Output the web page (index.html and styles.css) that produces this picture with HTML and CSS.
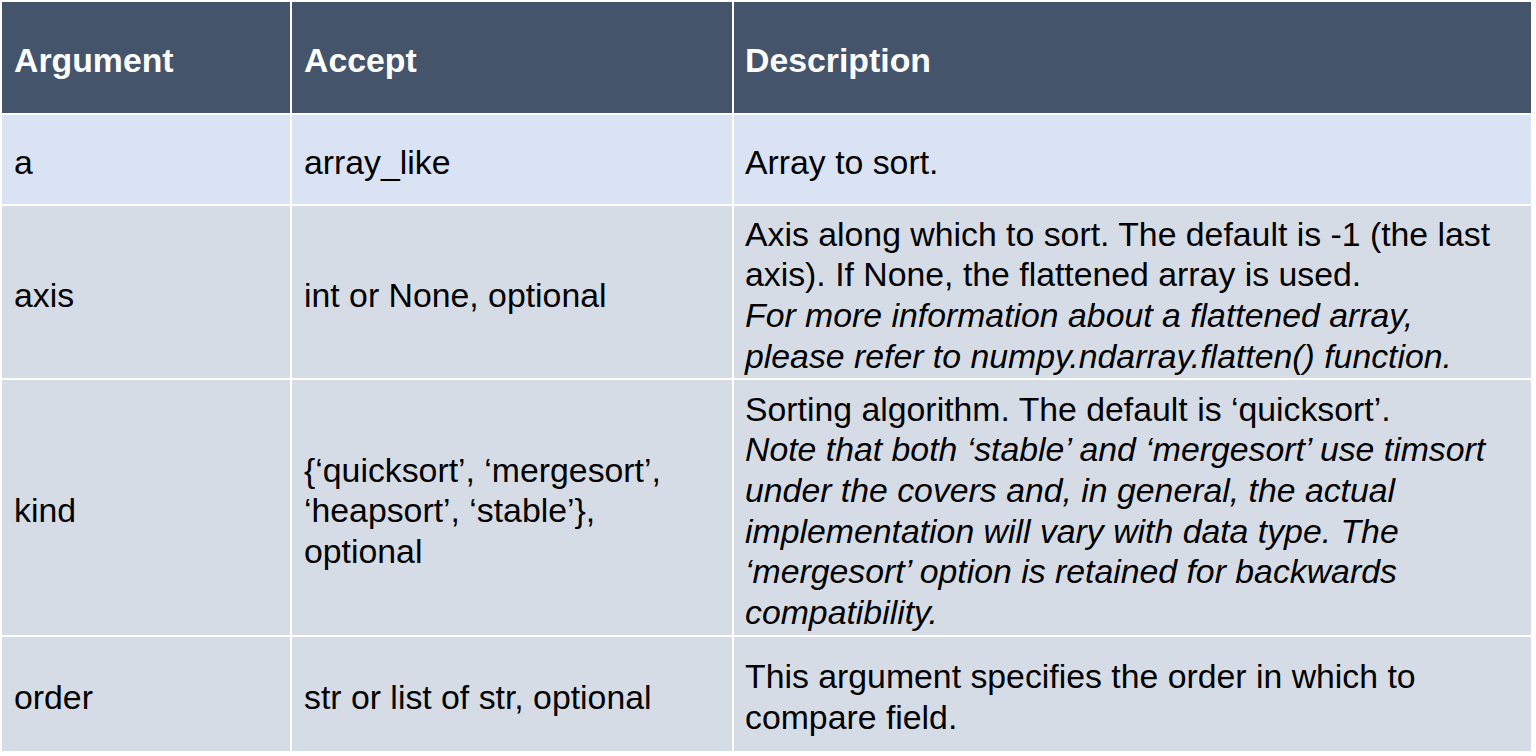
FILE: index.html
```html
<!DOCTYPE html>
<html lang="en">
<head>
<meta charset="utf-8">
<title>numpy.sort arguments</title>
<link rel="stylesheet" href="styles.css">
</head>
<body>
<table class="args">
  <colgroup>
    <col class="c1">
    <col class="c2">
    <col class="c3">
  </colgroup>
  <thead>
    <tr class="head">
      <th>Argument</th>
      <th>Accept</th>
      <th>Description</th>
    </tr>
  </thead>
  <tbody>
    <tr class="row-a first">
      <td>a</td>
      <td>array_like</td>
      <td>Array to sort.</td>
    </tr>
    <tr class="row-axis">
      <td>axis</td>
      <td>int or None, optional</td>
      <td>Axis along which to sort. The default is -1 (the last axis). If None, the flattened array is used.<br><em>For more information about a flattened array, please refer to numpy.ndarray.flatten() function.</em></td>
    </tr>
    <tr class="row-kind">
      <td>kind</td>
      <td>{‘quicksort’, ‘mergesort’, ‘heapsort’, ‘stable’}, optional</td>
      <td>Sorting algorithm. The default is ‘quicksort’.<br><em>Note that both ‘stable’ and ‘mergesort’ use timsort under the covers and, in general, the actual implementation will vary with data type. The ‘mergesort’ option is retained for backwards compatibility.</em></td>
    </tr>
    <tr class="row-order">
      <td>order</td>
      <td>str or list of str, optional</td>
      <td>This argument specifies the order in which to compare field.</td>
    </tr>
  </tbody>
</table>
</body>
</html>
```

FILE: styles.css
```css
html, body {
  margin: 0;
  padding: 0;
  background: #ffffff;
}

body {
  font-family: "Liberation Sans", Arial, sans-serif;
  color: #000000;
}

.args {
  border-collapse: separate;
  border-spacing: 2px;
  table-layout: fixed;
  width: 1533px;
  font-size: 33.8px;
  line-height: 40.6px;
}

.c1 { width: 288px; }
.c2 { width: 440px; }
.c3 { width: 797px; }

.args th,
.args td {
  padding: 6px 12px 0 12px;
  vertical-align: middle;
  text-align: left;
}

.args th {
  background: #44546a;
  color: #ffffff;
  font-weight: bold;
  height: 105px;
}

.args td {
  background: #d6dce5;
}

.args .first td {
  background: #dae3f3;
  height: 83px;
}

.row-axis td { height: 166px; }
.row-kind td { height: 249px; }
.row-order td { height: 108px; }

.args td:nth-child(3),
.args th:nth-child(3) {
  padding-left: 11px;
}

.args em {
  font-style: italic;
}
```
